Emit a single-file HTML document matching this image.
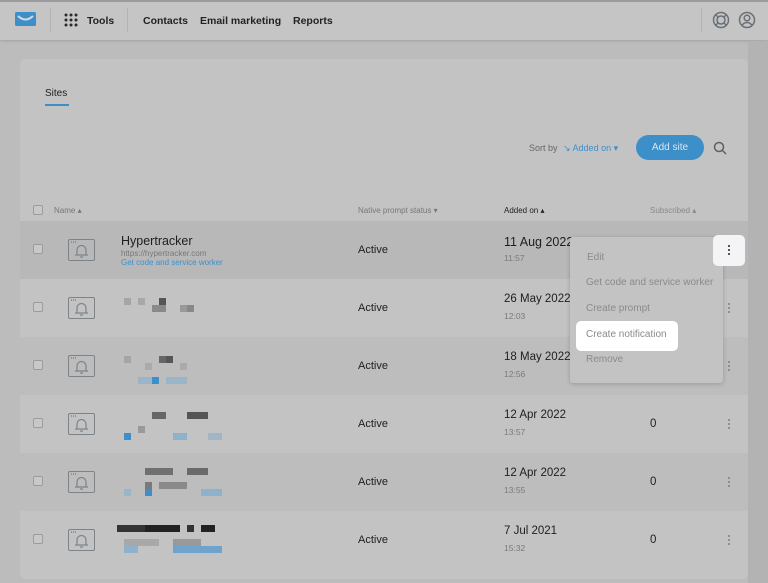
<!DOCTYPE html>
<html><head><meta charset="utf-8"><style>
*{box-sizing:border-box;margin:0;padding:0}
body{width:768px;height:583px;overflow:hidden;background:#bcbcbc;font-family:"Liberation Sans",sans-serif;position:relative;color:#1e1e1e}
.a{position:absolute}
.hdr{left:0;top:0;width:768px;height:40px;background:#c5c5c5;border-top:2px solid #9a9a9a;box-shadow:0 1px 3px rgba(0,0,0,.15)}
.nav{font-size:10.5px;font-weight:bold;color:#222;top:15px}
.card{left:20px;top:59px;width:728px;height:520px;background:#c3c3c3;border-radius:5px}
.row{left:20px;width:728px;height:58px}
.cb{width:10px;height:10px;border:1px solid #9c9c9c;border-radius:2px;background:#c8c8c8;left:33px}
.ico{left:68px;width:27px;height:22px;border:1.4px solid #7d8489;border-radius:2px}
.st{left:358px;font-size:11px;color:#1e1e1e}
.dt{left:504px;font-size:11.5px}
.tm{left:504px;font-size:8.5px;color:#7a7a7a}
.z{left:650px;font-size:11.5px}
.dots{left:728px;width:3px}
.dots i{display:block;width:2px;height:2px;border-radius:1px;background:#808080;margin-bottom:2px}
.px{width:7px;height:7px}
.mi{left:586px;font-size:10px;color:#8a8a8a}
</style></head><body>
<div class="a hdr"></div>
<svg class="a" style="left:15px;top:12px" width="21" height="14" viewBox="0 0 21 14"><rect width="21" height="14" rx="1.5" fill="#3d8fc9"/><path d="M3 4 Q10.5 11 18 4" stroke="#d8d8d8" stroke-width="2" fill="none"/></svg>
<div class="a" style="left:50px;top:8px;width:1px;height:24px;background:#b4b4b4"></div>
<svg class="a" style="left:64px;top:13px" width="14" height="14"><g fill="#2a2a2a"><circle cx="2" cy="2" r="1.5"/><circle cx="7" cy="2" r="1.5"/><circle cx="12" cy="2" r="1.5"/><circle cx="2" cy="7" r="1.5"/><circle cx="7" cy="7" r="1.5"/><circle cx="12" cy="7" r="1.5"/><circle cx="2" cy="12" r="1.5"/><circle cx="7" cy="12" r="1.5"/><circle cx="12" cy="12" r="1.5"/></g></svg>
<div class="a nav" style="left:87px">Tools</div>
<div class="a" style="left:127px;top:8px;width:1px;height:24px;background:#b4b4b4"></div>
<div class="a nav" style="left:143px">Contacts</div>
<div class="a nav" style="left:200px">Email marketing</div>
<div class="a nav" style="left:293px">Reports</div>
<div class="a" style="left:701px;top:8px;width:1px;height:24px;background:#b4b4b4"></div>
<svg class="a" style="left:712px;top:11px" width="18" height="18" viewBox="0 0 18 18" fill="none" stroke="#6a7077" stroke-width="1.5"><circle cx="9" cy="9" r="7.5"/><circle cx="9" cy="9" r="4"/><path d="M4 4l2 2M14 4l-2 2M4 14l2-2M14 14l-2-2"/></svg>
<svg class="a" style="left:738px;top:11px" width="18" height="18" viewBox="0 0 18 18" fill="none" stroke="#6a7077" stroke-width="1.5"><circle cx="9" cy="9" r="7.5"/><circle cx="9" cy="7" r="2.8"/><path d="M4 14.5c1.5-2.5 3-3 5-3s3.5.5 5 3"/></svg>
<div class="a" style="left:748px;top:42px;width:20px;height:541px;background:#b3b3b3"></div>
<div class="a card"></div>
<div class="a" style="left:45px;top:88px;font-size:10px">Sites</div>
<div class="a" style="left:45px;top:104px;width:24px;height:2px;background:#3d8fc9"></div>
<div class="a" style="left:529px;top:143px;font-size:9px;color:#666">Sort by</div>
<div class="a" style="left:563px;top:143px;font-size:9px;color:#3d8fc9">↘ Added on ▾</div>
<div class="a" style="left:636px;top:135px;width:68px;height:25px;border-radius:13px;background:#3d8fc9;color:#d9e6ef;font-size:10px;text-align:center;line-height:25px">Add site</div>
<svg class="a" style="left:713px;top:141px" width="14" height="14" fill="none" stroke="#5a6068" stroke-width="1.5"><circle cx="6" cy="6" r="4.5"/><path d="M9.5 9.5l3.5 3.5"/></svg>
<div class="a cb" style="top:205px"></div>
<div class="a" style="left:54px;top:206px;font-size:8px;color:#777">Name ▴</div>
<div class="a" style="left:358px;top:206px;font-size:8px;color:#777">Native prompt status ▾</div>
<div class="a" style="left:504px;top:206px;font-size:8px;color:#222">Added on ▴</div>
<div class="a" style="left:650px;top:206px;font-size:8px;color:#888">Subscribed ▴</div>

<div class="a row" style="top:221px;background:#b8b8b8"></div>
<div class="a row" style="top:279px;background:#c3c3c3"></div>
<div class="a row" style="top:337px;background:#bdbdbd"></div>
<div class="a row" style="top:395px;background:#c3c3c3"></div>
<div class="a row" style="top:453px;background:#bdbdbd"></div>
<div class="a row" style="top:511px;background:#c3c3c3"></div>

<div class="a cb" style="top:244px"></div><div class="a ico" style="top:239px"></div>
<div class="a cb" style="top:302px"></div><div class="a ico" style="top:297px"></div>
<div class="a cb" style="top:360px"></div><div class="a ico" style="top:355px"></div>
<div class="a cb" style="top:418px"></div><div class="a ico" style="top:413px"></div>
<div class="a cb" style="top:476px"></div><div class="a ico" style="top:471px"></div>
<div class="a cb" style="top:534px"></div><div class="a ico" style="top:529px"></div>
<svg class="a" style="left:68px;top:239px" width="27" height="330" fill="none" stroke="#7d8489" stroke-width="1.2">
<g id="b"><path d="M9 16v-5a4.5 4.5 0 0 1 9 0v5zM7 16h13M12 18h3"/><path d="M3 3h1M5 3h1M7 3h1" stroke-width="1.5"/></g>
<use href="#b" y="58"/><use href="#b" y="116"/><use href="#b" y="174"/><use href="#b" y="232"/><use href="#b" y="290"/>
</svg>

<div class="a" style="left:121px;top:234px;font-size:12.5px">Hypertracker</div>
<div class="a" style="left:121px;top:249px;font-size:8px;color:#777">https://hypertracker.com</div>
<div class="a" style="left:121px;top:258px;font-size:8px;color:#3d8fc9">Get code and service worker</div>

<div class="a px" style="left:124px;top:298px;background:#a5a5a5"></div><div class="a px" style="left:138px;top:298px;background:#a8a8a8"></div><div class="a px" style="left:159px;top:298px;background:#555"></div><div class="a px" style="left:152px;top:305px;background:#8a8a8a"></div><div class="a px" style="left:159px;top:305px;background:#888"></div><div class="a px" style="left:180px;top:305px;background:#999"></div><div class="a px" style="left:187px;top:305px;background:#888"></div>
<div class="a px" style="left:124px;top:356px;background:#a5a5a5"></div><div class="a px" style="left:159px;top:356px;background:#666"></div><div class="a px" style="left:166px;top:356px;background:#555"></div><div class="a px" style="left:145px;top:363px;background:#aaa"></div><div class="a px" style="left:180px;top:363px;background:#aaa"></div><div class="a px" style="left:138px;top:377px;width:14px;background:#9ab4c8"></div><div class="a px" style="left:152px;top:377px;background:#3d8fc9"></div><div class="a px" style="left:166px;top:377px;width:21px;background:#9ab4c8"></div>
<div class="a px" style="left:152px;top:412px;width:14px;background:#666"></div><div class="a px" style="left:187px;top:412px;width:21px;background:#555"></div><div class="a px" style="left:138px;top:426px;background:#999"></div><div class="a px" style="left:124px;top:433px;background:#3d8fc9"></div><div class="a px" style="left:173px;top:433px;width:14px;background:#8fb2cc"></div><div class="a px" style="left:208px;top:433px;width:14px;background:#a0b6c6"></div>
<div class="a px" style="left:145px;top:468px;width:28px;background:#707070"></div><div class="a px" style="left:187px;top:468px;width:21px;background:#6a6a6a"></div><div class="a px" style="left:145px;top:482px;background:#7a7a7a"></div><div class="a px" style="left:159px;top:482px;width:28px;background:#8a8a8a"></div><div class="a px" style="left:145px;top:489px;background:#3d8fc9"></div><div class="a px" style="left:124px;top:489px;background:#9ab4c8"></div><div class="a px" style="left:201px;top:489px;width:21px;background:#8fb2cc"></div>
<div class="a px" style="left:117px;top:525px;width:28px;background:#333"></div><div class="a px" style="left:145px;top:525px;width:35px;background:#222"></div><div class="a px" style="left:187px;top:525px;background:#333"></div><div class="a px" style="left:201px;top:525px;width:14px;background:#222"></div><div class="a px" style="left:124px;top:539px;width:35px;background:#a8a8a8"></div><div class="a px" style="left:173px;top:539px;width:28px;background:#999"></div><div class="a px" style="left:124px;top:546px;width:14px;background:#8fb2cc"></div><div class="a px" style="left:173px;top:546px;width:49px;background:#6fa3cc"></div>

<div class="a st" style="top:244px">Active</div><div class="a st" style="top:302px">Active</div><div class="a st" style="top:360px">Active</div><div class="a st" style="top:418px">Active</div><div class="a st" style="top:476px">Active</div><div class="a st" style="top:534px">Active</div>
<div class="a dt" style="top:235px;font-size:12.5px">11 Aug 2022</div><div class="a tm" style="top:253px">11:57</div>
<div class="a dt" style="top:293px">26 May 2022</div><div class="a tm" style="top:311px">12:03</div>
<div class="a dt" style="top:351px">18 May 2022</div><div class="a tm" style="top:369px">12:56</div>
<div class="a dt" style="top:409px">12 Apr 2022</div><div class="a tm" style="top:427px">13:57</div>
<div class="a dt" style="top:467px">12 Apr 2022</div><div class="a tm" style="top:485px">13:55</div>
<div class="a dt" style="top:525px">7 Jul 2021</div><div class="a tm" style="top:543px">15:32</div>
<div class="a z" style="top:418px">0</div><div class="a z" style="top:476px">0</div><div class="a z" style="top:534px">0</div>
<div class="a dots" style="top:303px"><i></i><i></i><i></i></div>
<div class="a dots" style="top:361px"><i></i><i></i><i></i></div>
<div class="a dots" style="top:419px"><i></i><i></i><i></i></div>
<div class="a dots" style="top:477px"><i></i><i></i><i></i></div>
<div class="a dots" style="top:535px"><i></i><i></i><i></i></div>

<div class="a" style="left:570px;top:237px;width:153px;height:146px;background:#c3c3c3;border-radius:3px;box-shadow:0 1px 5px rgba(0,0,0,.2)"></div>
<div class="a mi" style="top:252px;left:587px">Edit</div>
<div class="a mi" style="top:277px">Get code and service worker</div>
<div class="a mi" style="top:303px">Create prompt</div>
<div class="a" style="left:576px;top:321px;width:102px;height:30px;background:#fff;border-radius:5px"></div>
<div class="a mi" style="top:329px">Create notification</div>
<div class="a mi" style="top:354px">Remove</div>
<div class="a" style="left:713px;top:235px;width:32px;height:31px;background:#f4f4f6;border-radius:5px"></div>
<div class="a dots" style="left:728px;top:245px"><i style="background:#222"></i><i style="background:#222"></i><i style="background:#222"></i></div>
</body></html>
